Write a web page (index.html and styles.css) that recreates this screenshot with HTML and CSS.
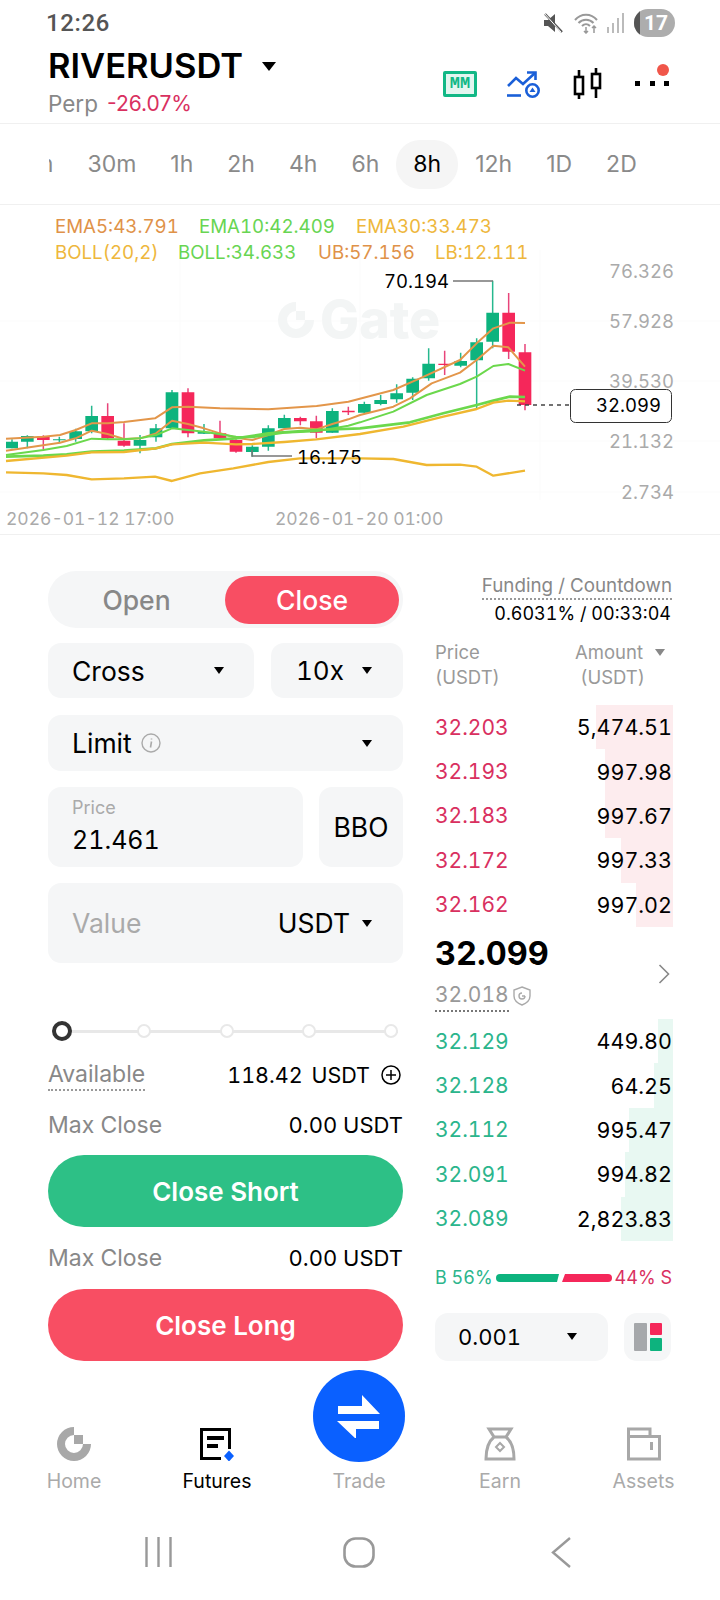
FILE: index.html
```html
<!DOCTYPE html>
<html lang="en">
<head>
<meta charset="utf-8">
<title>RIVERUSDT Futures</title>
<link rel="stylesheet" href="styles.css">
</head>
<body>
<div class="screen">
  <div class="status">
    <span class="time">12:26</span>
    <div class="status-icons">
      <svg class="s-mute" width="20" height="20" viewBox="0 0 20 20"><path d="M1 7h4l7-6v18l-7-6H1z" fill="#555"/><path d="M2 1l17 18" stroke="#555" stroke-width="2.4"/><path d="M1 0l17 19" stroke="#fff" stroke-width="1"/></svg>
      <svg class="s-wifi" width="27" height="22" viewBox="0 0 27 22" fill="none" stroke="#999" stroke-width="2"><path d="M1 8c6-7 16-7 22 0M4.500 11c4-4.500 11-4.500 15 0M8 14c2.500-2.500 5.500-2.500 8 0"/><path d="M12 15v6M10 19l2 2 2-2M20 21v-7M18 16l2-2 2 2" stroke-width="1.500"/></svg>
      <svg class="s-signal" width="18" height="20" viewBox="0 0 18 20" fill="#bbb"><rect x="0" y="14" width="2" height="6"/><rect x="5" y="10" width="2" height="10"/><rect x="10" y="5" width="2" height="15"/><rect x="15" y="0" width="2" height="20"/></svg>
      <span class="battery"><span class="battery-cap"></span><span class="battery-num">17</span></span>
    </div>
  </div>

  <header class="header">
    <div class="pair">
      <div class="pair-title"><h1 class="symbol">RIVERUSDT</h1><span class="caret caret-lg"></span></div>
      <div class="pair-sub"><span class="perp">Perp</span><span class="change">-26.07%</span></div>
    </div>
    <div class="tools">
      <span class="mm">MM</span>
      <svg width="33" height="27" viewBox="0 0 33 27" fill="none" stroke="#1a5fd8" stroke-width="2.600"><path d="M1 15l8-8 7 6L28 2"/><path d="M20 1.500h8.500V9"/><path d="M0 24.500h14"/><circle cx="25.500" cy="19.500" r="6.200"/><path d="M25.500 16.500l3 4.500h-6z" fill="#1a5fd8" stroke="none"/></svg>
      <svg width="29" height="32" viewBox="0 0 29 32" fill="none" stroke="#000" stroke-width="2.600"><path d="M6 2v7M6 26v5M23 0v6M23 20v10"/><rect x="2" y="9" width="8" height="17"/><rect x="19" y="6" width="8" height="14"/></svg>
      <svg width="36" height="40" viewBox="0 0 36 40"><path d="M0 17h5v5H0zM15 17h5v5h-5zM29 17h5v5h-5z"/><circle cx="28" cy="6" r="6" fill="#f0564a"/></svg>
    </div>
  </header>

  <nav class="tabs">
    <div class="tab-track">
      <span class="tab">15m</span><span class="tab">30m</span><span class="tab">1h</span><span class="tab">2h</span><span class="tab">4h</span><span class="tab">6h</span><span class="tab tab-on">8h</span><span class="tab">12h</span><span class="tab">1D</span><span class="tab">2D</span>
    </div>
  </nav>

  <section class="chart">
    <svg class="chart-svg" width="720" height="330" viewBox="0 205 720 330">
      <path class="grid" d="M0 321H720M0 381H720M0 441H720M0 492H720M180 250V500M360 250V500M540 250V500"/>
      <g class="wm">
        <path d="M296 302A18 18 0 1 0 314 320H305A9 9 0 1 1 296 311ZM296 311h9v9h-9z"/>
        <text x="320" y="338">Gate</text>
      </g>
      <text class="lg c-or" x="55" y="233">EMA5:43.791</text>
      <text class="lg c-gr" x="199" y="233">EMA10:42.409</text>
      <text class="lg c-ye" x="356" y="233">EMA30:33.473</text>
      <text class="lg c-ye" x="55" y="259">BOLL(20,2)</text>
      <text class="lg c-gr" x="178" y="259">BOLL:34.633</text>
      <text class="lg c-or" x="318" y="259">UB:57.156</text>
      <text class="lg c-ye" x="435" y="259">LB:12.111</text>
      <text class="ax" x="674" y="278">76.326</text>
      <text class="ax" x="674" y="328">57.928</text>
      <text class="ax" x="674" y="388">39.530</text>
      <text class="ax" x="674" y="448">21.132</text>
      <text class="ax" x="674" y="499">2.734</text>
      <text class="tm" x="6" y="525">2026-01-12 17:00</text>
      <text class="tm" x="275" y="525">2026-01-20 01:00</text>
      <g transform="translate(0 260) scale(.33333)">
        <path class="w-up" d="M36 538V565M82 526V565M178 530V550M227 506V545M275 437V520M420 525V580M468 492V545M516 390V505M612 492V522M757 556V590M805 496V572M853 464V505M997 445V518M1093 425V460M1142 405V436M1190 373V428M1238 352V420M1286 265V362M1382 278V322M1430 235V445M1478 62V265"/>
        <path class="w-dn" d="M130 526V572M323 430V540M372 490V560M564 385V532M660 482V538M708 538V578M901 470V496M949 467V535M1045 440V465M1334 272V345M1526 99V297M1575 252V451"/>
        <path class="b-up" d="M18 545h36v20h-36zM63 528h38v17h-38zM159 538h38v3h-38zM208 514h38v23h-38zM256 468h38v46h-38zM401 540h38v17h-38zM449 505h38v27h-38zM497 397h38v108h-38zM593 515h38v6h-38zM738 560h38v16h-38zM786 505h38v55h-38zM834 474h38v31h-38zM978 453h38v65h-38zM1074 432h38v26h-38zM1123 420h38v12h-38zM1171 400h38v18h-38zM1219 356h38v42h-38zM1267 311h38v44h-38zM1363 303h38v14h-38zM1411 247h38v54h-38zM1459 158h38v87h-38z"/>
        <path class="b-dn" d="M111 530h38v10h-38zM304 468h38v67h-38zM353 542h38v15h-38zM545 397h38v123h-38zM641 520h38v15h-38zM689 540h38v35h-38zM882 474h38v10h-38zM930 484h38v34h-38zM1026 452h38v5h-38zM1315 311h38v4h-38zM1507 158h38v117h-38zM1556 277h38v158h-38z"/>
        <path class="ln l-or" d="M18 536L130 530L180 525L227 510L275 490L323 490L372 486L465 475L516 442L564 440L660 445L805 448L950 438L1045 425L1180 390L1260 355L1380 300L1430 250L1480 205L1530 188L1575 189"/>
        <path class="ln l-or" d="M18 572L180 548L227 535L275 512L323 522L372 537L420 535L468 520L516 482L564 492L612 505L660 520L708 533L757 540L805 525L853 507L901 503L949 508L997 492L1045 478L1080 465L1180 440L1230 415L1295 370L1380 338L1430 300L1480 257L1525 262L1575 320"/>
        <path class="ln l-gr" d="M18 585L130 570L200 558L275 536L323 538L372 538L420 535L468 525L516 505L612 515L708 530L757 532L805 525L853 518L949 514L1045 497L1080 487L1180 455L1280 405L1380 372L1430 350L1480 318L1525 312L1575 332"/>
        <path class="ln l-gr thick" d="M18 590L130 587L200 583L275 575L372 572L468 565L516 552L612 541L708 535L805 520L949 510L1080 505L1230 487L1330 460L1430 435L1480 422L1530 410L1575 411"/>
        <path class="ln l-ye" d="M18 603L200 587L275 577L372 576L468 565L516 553L612 548L708 553L757 552L853 546L949 538L1080 522L1210 500L1330 470L1430 447L1480 428L1525 422L1575 424"/>
        <path class="ln l-ye" d="M18 637L130 640L200 645L275 658L372 655L465 650L516 663L600 640L700 625L805 606L900 595L1080 595L1180 597L1280 615L1380 614L1430 620L1480 647L1575 632"/>
      </g>
      <path class="lead" d="M453 281H493M252 450V456H292"/>
      <text class="note" x="384" y="288">70.194</text>
      <text class="note" x="297" y="464">16.175</text>
      <path class="dash" d="M517 405H570"/>
      <rect class="pbox" x="570.500" y="389.500" width="101" height="33" rx="5"/>
      <text class="pnum" x="661" y="412">32.099</text>
    </svg>
  </section>

  <main class="main">
    <div class="form">
      <div class="toggle"><span class="toggle-opt">Open</span><span class="toggle-opt toggle-on">Close</span></div>
      <div class="row row-cross">
        <div class="field field-grow"><span>Cross</span><span class="caret"></span></div>
        <div class="field field-lev"><span>10x</span><span class="caret"></span></div>
      </div>
      <div class="row row-limit">
        <div class="field field-grow"><span class="limit-l">Limit<svg class="info" width="20" height="20" viewBox="0 0 20 20" fill="none" stroke="#aaa" stroke-width="1.400"><circle cx="10" cy="10" r="9"/><path d="M10.500 5.500v1M10.500 8.500l-1 6" stroke-width="1.600"/></svg></span><span class="caret"></span></div>
      </div>
      <div class="row row-price">
        <div class="field-stack"><span class="mini-label">Price</span><span class="price-val">21.461</span></div>
        <div class="field-bbo">BBO</div>
      </div>
      <div class="row row-value">
        <div class="field field-grow"><span class="placeholder">Value</span><span class="unit">USDT<span class="caret"></span></span></div>
      </div>
      <div class="slider">
        <span class="knob"></span><span class="node"></span><span class="node"></span><span class="node"></span><span class="node"></span>
      </div>
      <div class="kv kv-avail">
        <span class="k k-dot">Available</span>
        <span class="v v-avail"><span>118.42 USDT</span><svg width="20" height="20" viewBox="0 0 20 20" fill="none" stroke="#000" stroke-width="1.500"><circle cx="10" cy="10" r="9"/><path d="M5 10h10M10 5v10"/></svg></span>
      </div>
      <div class="kv kv-max"><span class="k">Max Close</span><span class="v">0.00 USDT</span></div>
      <button class="btn btn-green">Close Short</button>
      <div class="kv kv-max2"><span class="k">Max Close</span><span class="v">0.00 USDT</span></div>
      <button class="btn btn-red">Close Long</button>
    </div>

    <div class="book">
      <div class="funding">
        <span class="fund-k">Funding / Countdown</span>
        <span class="fund-v">0.6031% / 00:33:04</span>
      </div>
      <div class="book-head">
        <div>Price<br>(USDT)</div>
        <div class="head-r"><span class="amt">Amount<span class="caret caret-grey"></span></span><span class="amt-u">(USDT)</span></div>
      </div>
      <div class="levels asks">
        <div class="lvl"><i class="depth" style="width:77px"></i><span class="p">32.203</span><span class="a">5,474.51</span></div>
        <div class="lvl"><i class="depth" style="width:68px"></i><span class="p">32.193</span><span class="a">997.98</span></div>
        <div class="lvl"><i class="depth" style="width:68px"></i><span class="p">32.183</span><span class="a">997.67</span></div>
        <div class="lvl"><i class="depth" style="width:52px"></i><span class="p">32.172</span><span class="a">997.33</span></div>
        <div class="lvl"><i class="depth" style="width:37px"></i><span class="p">32.162</span><span class="a">997.02</span></div>
      </div>
      <div class="mid">
        <div class="mid-l">
          <div class="last">32.099</div>
          <div class="mark"><span class="mark-n">32.018</span><svg width="18" height="20" viewBox="0 0 18 20" fill="none" stroke="#aaa" stroke-width="1.400"><path d="M9 1l8 3v6c0 4-3 7-8 9-5-2-8-5-8-9V4z"/><path d="M12 10a3 3 0 1 1-3-3M9 10h3"/></svg></div>
        </div>
        <svg class="chev" width="12" height="20" viewBox="0 0 12 20" fill="none" stroke="#888" stroke-width="1.600"><path d="M1.500 1l9 9-9 9"/></svg>
      </div>
      <div class="levels bids">
        <div class="lvl"><i class="depth" style="width:15px"></i><span class="p">32.129</span><span class="a">449.80</span></div>
        <div class="lvl"><i class="depth" style="width:19px"></i><span class="p">32.128</span><span class="a">64.25</span></div>
        <div class="lvl"><i class="depth" style="width:44px"></i><span class="p">32.112</span><span class="a">995.47</span></div>
        <div class="lvl"><i class="depth" style="width:48px"></i><span class="p">32.091</span><span class="a">994.82</span></div>
        <div class="lvl"><i class="depth" style="width:52px"></i><span class="p">32.089</span><span class="a">2,823.83</span></div>
      </div>
      <div class="ratio">
        <span class="ratio-b">B 56%</span>
        <svg width="116" height="8" viewBox="0 0 116 8"><path d="M4 0H63L61 8H4A4 4 0 0 1 4 0Z" fill="#0db37e"/><path d="M69 0H112A4 4 0 0 1 112 8H66Z" fill="#f5275a"/></svg>
        <span class="ratio-s">44% S</span>
      </div>
      <div class="book-foot">
        <div class="prec"><span>0.001</span><span class="caret"></span></div>
        <div class="layout"><svg width="28" height="28" viewBox="0 0 28 28"><rect width="13" height="28" rx="1" fill="#a6a8ab"/><rect x="16" width="12" height="12" rx="1" fill="#f5275a"/><rect x="16" y="15" width="12" height="13" rx="1" fill="#0db37e"/></svg></div>
      </div>
    </div>
  </main>

  <div class="tabbar">
    <div class="fab"><svg width="44" height="44" viewBox="0 0 44 44"><path d="M1 12H25V1L43 20H1ZM42 27H0L19 45V35H42Z" fill="#fff"/></svg></div>
    <div class="nav-item">
      <svg class="nav-ic" width="34" height="34" viewBox="0 0 34 34" fill="#a8a8a8"><path d="M17 0A17 17 0 1 0 34 17H26A9 9 0 1 1 17 8Z"/><path d="M17 8h9v9h-9z"/></svg>
      <span>Home</span>
    </div>
    <div class="nav-item nav-on">
      <svg class="nav-ic" width="34" height="34" viewBox="0 0 34 34"><path d="M21 31.500H1.500V2.500H29.500V22" fill="none" stroke="#000" stroke-width="3"/><path d="M7 9h17v4H7zM7 17h11v4H7z"/><path d="M29 23.500L34 29l-5 5.500-5-5.500z" fill="#0a60ff"/></svg>
      <span>Futures</span>
    </div>
    <div class="nav-item"><span class="nav-ic"></span><span>Trade</span></div>
    <div class="nav-item">
      <svg class="nav-ic" width="32" height="34" viewBox="0 0 32 34" fill="none" stroke="#a8a8a8" stroke-width="3"><path d="M5 2H27L22 10C27 14 30 20 30 32H2C2 20 5 14 10 10Z M10 10H22"/><path d="M16 16l4 4-4 4-4-4z" stroke-width="2"/></svg>
      <span>Earn</span>
    </div>
    <div class="nav-item">
      <svg class="nav-ic" width="34" height="34" viewBox="0 0 34 34" fill="none" stroke="#a8a8a8" stroke-width="3"><path d="M1.500 32V2H23V9M1.500 9.500H32.500V32H1.500Z"/><path d="M24.500 15v8"/></svg>
      <span>Assets</span>
    </div>
  </div>

  <div class="sysnav">
    <svg class="sys-recent" width="27" height="30" viewBox="0 0 27 30" stroke="#999" stroke-width="2.400"><path d="M1.500 0V30M13.500 0V30M25.500 0V30"/></svg>
    <svg class="sys-home" width="32" height="31" viewBox="0 0 32 31" fill="none" stroke="#999" stroke-width="2.600"><rect x="1.500" y="1.500" width="29" height="28" rx="11"/></svg>
    <svg class="sys-back" width="20" height="31" viewBox="0 0 20 31" fill="none" stroke="#999" stroke-width="2.400"><path d="M19 1L2 15.500 19 30"/></svg>
  </div>
</div>
</body>
</html>
```

FILE: styles.css
```css
* { box-sizing: border-box; }
html, body { margin: 0; padding: 0; background: #fff; }
body { font-family: Inter, "Liberation Sans", sans-serif; color: #000; font-variant-numeric: tabular-nums; }
.screen { width: 720px; height: 1600px; position: relative; overflow: hidden; }

/* status bar */
.status { height: 46px; display: flex; align-items: flex-start; justify-content: space-between; padding: 9px 45px 0 46px; }
.time { font-family: Roboto, sans-serif; font-size: 24px; line-height: 28px; font-weight: 500; color: #555; letter-spacing: .6px; }
.status-icons { display: flex; align-items: center; height: 28px; }
.s-mute { margin-right: 11px; }
.s-wifi { margin-right: 6px; }
.s-signal { margin-right: 9px; }
.battery { position: relative; width: 41px; height: 28px; border-radius: 14px; background: #adadad; overflow: hidden; display: flex; align-items: center; justify-content: flex-end; padding-right: 7px; }
.battery-cap { position: absolute; left: 0; top: 0; bottom: 0; width: 6px; background: #555; }
.battery-num { font-family: Roboto, sans-serif; font-weight: 700; font-size: 21px; color: #fff; }

/* header */
.header { height: 78px; padding: 2px 49px 0 48px; border-bottom: 1px solid #f0f0f0; display: flex; justify-content: space-between; position: relative; }
.pair-title { display: flex; align-items: center; height: 36px; }
.symbol { margin: 0; font-size: 34.500px; line-height: 36px; font-weight: 600; letter-spacing: 0; }
.caret { display: inline-block; width: 0; height: 0; border-left: 5px solid transparent; border-right: 5px solid transparent; border-top: 7px solid #000; }
.caret-lg { margin-left: 19px; border-left-width: 7px; border-right-width: 7px; border-top-width: 9px; }
.pair-sub { margin-top: 6px; font-size: 22.500px; line-height: 28px; display: flex; gap: 9px; }
.perp { color: #888; }
.change { color: #d9305f; font-size: 21px; font-variant-numeric: normal; }
.tools { display: flex; align-items: center; gap: 30px; height: 40px; margin-top: 16px; margin-right: 0; }
.tools svg:nth-child(3), .tools svg:nth-child(4) { margin-left: 3px; }
.mm { width: 34px; height: 26px; border: 3px solid #12b886; border-radius: 2px; background: #e3f6f0; font-family: "Liberation Mono", monospace; font-weight: 700; font-size: 17px; line-height: 20px; color: #12b886; text-align: center; }

/* timeframes */
.tabs { height: 81px; margin-left: 49px; overflow: hidden; padding-top: 16px; }
.tab-track { display: flex; margin-left: -56px; }
.tab { flex: none; padding: 0 17px; height: 49px; line-height: 49px; font-size: 23px; color: #8a8a8a; border-radius: 24px; font-variant-numeric: normal; }
.tab-on { color: #000; background: #f5f5f5; }

/* chart */
.chart { height: 331px; border-top: 1px solid #f0f0f0; border-bottom: 1px solid #f0f0f0; margin-top: -1px; }
.chart-svg { display: block; }
.grid { stroke: #fbfbfb; stroke-width: 1; fill: none; }
.wm { fill: #f3f5f5; }
.wm text { font-size: 52px; font-weight: 800; font-variant-numeric: normal; }
.lg { font-size: 18.700px; }
.c-or { fill: #df9249; }
.c-gr { fill: #68d552; }
.c-ye { fill: #eeb73c; }
.ax { font-size: 18.500px; fill: #aaa; text-anchor: end; }
.tm { font-size: 17.500px; fill: #aaa; }
.w-up { stroke: #26b88e; stroke-width: 4.500; fill: none; }
.w-dn { stroke: #e8447a; stroke-width: 4.500; fill: none; }
.b-up { fill: #0db37e; }
.b-dn { fill: #f5275a; }
.ln { fill: none; stroke-width: 6; stroke-linejoin: round; }
.l-or { stroke: #e3964a; }
.l-gr { stroke: #6bd84c; }
.l-gr.thick { stroke-width: 8; }
.l-ye { stroke: #efb730; stroke-width: 7; }
.lead { fill: none; stroke: #777; stroke-width: 1.500; }
.note { font-size: 18.500px; fill: #000; }
.dash { stroke: #444; stroke-width: 1.500; stroke-dasharray: 4 4; }
.pbox { fill: #fff; stroke: #333; stroke-width: 1; }
.pnum { font-size: 18.500px; fill: #000; text-anchor: end; }

/* main */
.main { display: flex; padding-left: 48px; height: 827px; }
.form { width: 355px; padding-top: 36px; }
.toggle { height: 57px; border-radius: 28px; background: #f5f6f7; display: flex; align-items: center; padding: 0 4px 0 0; }
.toggle-opt { flex: 1; text-align: center; font-size: 26.500px; font-weight: 500; color: #888; line-height: 48px; }
.toggle-opt:first-child { flex: none; width: 177px; }
.toggle-on { background: #f84e63; color: #fff; border-radius: 24px; }
.row { display: flex; gap: 17px; }
.row-cross { height: 55px; margin-top: 15px; }
.row-limit { height: 56px; margin-top: 17px; }
.row-price { height: 80px; margin-top: 16px; gap: 16px; }
.row-value { height: 80px; margin-top: 16px; }
.field { background: #f5f6f7; border-radius: 13px; display: flex; align-items: center; justify-content: space-between; padding: 0 31px 0 24px; font-size: 26.500px; }
.field-grow { flex: 1; }
.row-cross .field-grow { padding-right: 30px; }
.field-lev { width: 132px; padding-left: 25px; font-size: 26px; }
.limit-l { display: flex; align-items: center; gap: 9px; }
.field-stack { width: 255px; background: #f5f6f7; border-radius: 13px; padding: 10px 0 0 24px; display: flex; flex-direction: column; }
.mini-label { font-size: 18px; line-height: 22px; color: #aaa; }
.price-val { font-size: 25px; line-height: 32px; margin-top: 5px; }
.field-bbo { flex: 1; background: #f5f6f7; border-radius: 13px; display: flex; align-items: center; justify-content: center; font-size: 26.500px; }
.placeholder { color: #aaa; }
.unit { display: flex; align-items: center; gap: 12px; }
.slider { height: 20px; margin: 58px 0 0 4px; width: 346px; display: flex; align-items: center; justify-content: space-between; background: linear-gradient(#e8e8e8, #e8e8e8) center / 100% 3px no-repeat; }
.knob { width: 20px; height: 20px; border-radius: 50%; background: #fff; border: 4px solid #333; margin-right: -3px; }
.node { width: 14px; height: 14px; border-radius: 50%; background: #fff; border: 2px solid #e8e8e8; }
.kv { display: flex; justify-content: space-between; align-items: center; font-size: 23px; }
.kv-avail { height: 32px; margin-top: 18px; }
.kv-max { height: 30px; margin-top: 19px; }
.kv-max2 { height: 30px; margin-top: 16px; }
.k { color: #888; }
.k-dot { height: 32px; line-height: 31px; margin-left: 0; border-bottom: 2px dotted #999; }
.v { color: #000; font-size: 22px; }
.v-avail { display: flex; align-items: center; gap: 11px; margin-right: 2px; font-size: 21.500px; word-spacing: 3px; }
.btn { display: block; width: 355px; height: 72px; margin-top: 15px; border: 0; border-radius: 36px; color: #fff; font-family: inherit; font-size: 26px; font-weight: 600; letter-spacing: 0; }
.btn-green { background: #2dc086; }
.btn-red { background: #f84e63; margin-top: 16px; }

/* order book */
.book { width: 238px; margin-left: 32px; padding-top: 39px; }
.funding { display: flex; flex-direction: column; align-items: flex-end; padding-right: 1px; }
.fund-k { font-size: 18.800px; line-height: 24px; color: #888; border-bottom: 2px dotted #999; height: 26px; }
.fund-v { font-size: 18px; line-height: 24px; margin-top: 2px; padding-right: 1px; }
.book-head { display: flex; justify-content: space-between; margin-top: 14px; font-size: 18.500px; line-height: 25px; color: #999; }
.head-r { display: flex; flex-direction: column; align-items: flex-end; }
.amt { display: flex; align-items: center; gap: 12px; padding-right: 8px; }
.amt-u { padding-right: 28px; }
.caret-grey { border-top-color: #888; }
.asks { margin-top: 15px; }
.lvl { position: relative; height: 44.400px; display: flex; justify-content: space-between; align-items: center; font-size: 21.500px; padding-right: 1px; }
.depth { position: absolute; right: 0; top: 0; bottom: 0; }
.asks .depth { background: #fdecee; }
.bids .depth { background: #e8f8f2; }
.p, .a { position: relative; }
.p { font-size: 21px; }
.asks .p { color: #d9305f; }
.bids .p { color: #2bb58c; }
.mid { height: 92px; padding-top: 7px; display: flex; justify-content: space-between; padding-right: 3px; }
.last { font-size: 32.500px; line-height: 40px; font-weight: 700; }
.mark { display: flex; align-items: center; gap: 4px; margin-top: 7px; }
.mark-n { font-size: 21px; line-height: 28px; color: #999; border-bottom: 2px dotted #777; height: 31px; }
.chev { margin-top: 30px; }
.ratio { height: 24px; margin-top: 25px; display: flex; align-items: center; justify-content: space-between; font-size: 18px; padding-right: 1px; }
.ratio-b { color: #2bb58c; }
.ratio-s { color: #d9305f; }
.book-foot { display: flex; justify-content: space-between; margin-top: 23px; height: 48px; padding-right: 2px; }
.prec { width: 173px; background: #f5f6f7; border-radius: 13px; display: flex; align-items: center; justify-content: space-between; padding: 0 31px 0 23px; font-size: 22px; }
.layout { width: 47px; background: #f5f6f7; border-radius: 13px; display: flex; align-items: center; justify-content: center; }

/* tab bar */
.tabbar { position: relative; height: 135px; display: grid; grid-template-columns: 142px 144px 140px 142px 145px; padding-left: 3px; }
.nav-item { display: flex; flex-direction: column; align-items: center; padding-top: 65px; font-size: 19.500px; line-height: 24px; color: #aaa; }
.nav-ic { height: 34px; margin-bottom: 8px; display: block; }
.nav-on { color: #000; }
.fab { position: absolute; left: 313px; top: 8px; width: 92px; height: 92px; border-radius: 50%; background: #0a60ff; display: flex; align-items: center; justify-content: center; }

/* system nav */
.sysnav { height: 104px; padding: 40px 0 0 145px; display: flex; align-items: flex-start; }
.sys-home { margin-left: 171px; }
.sys-back { margin-left: 176px; }
```
